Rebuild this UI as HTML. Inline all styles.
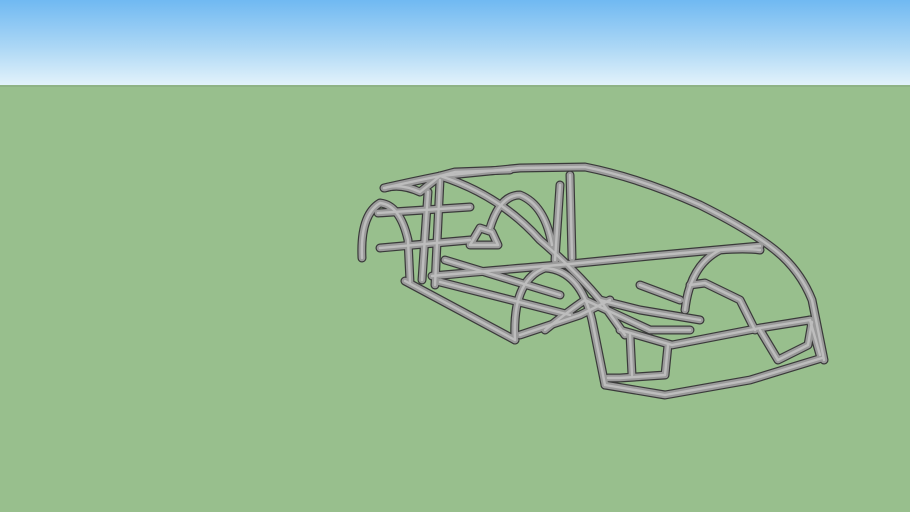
<!DOCTYPE html>
<html><head><meta charset="utf-8"><style>
html,body{margin:0;padding:0;width:910px;height:512px;overflow:hidden}
body{background:#98bf8d;position:relative}
.sky{position:absolute;left:0;top:0;width:910px;height:86px;background:linear-gradient(#70b9f2,#acd7f5 55%,#e4f3fb)}
.hz{position:absolute;left:0;top:85px;width:910px;height:2px;background:#8fb386}
svg{position:absolute;left:0;top:0}
</style></head><body>
<div class="sky"></div><div class="hz"></div>
<svg width="910" height="512" viewBox="0 0 910 512">
<defs>
<g id="f" fill="none" stroke-linejoin="round" stroke-linecap="round">
<path d="M384 188 Q410 182 440 176 L520 168 L585 167 Q640 178 700 205 Q750 230 775 250 Q800 270 812 300 L818 330 L824 360"/>
<path d="M440 176 L455 172 L510 170"/>
<path d="M440 176 Q500 195 540 240 Q575 270 600 300 L625 335"/>
<path d="M362 258 Q360 215 380 203 Q400 205 408 240 L410 282"/>
<path d="M385 188 Q400 183 420 192 L440 176"/>
<path d="M428 192 L422 280"/><path d="M440 180 L435 285"/>
<path d="M490 228 Q500 195 520 195 Q545 205 552 245"/>
<path d="M570 175 L572 258"/><path d="M560 185 L555 260"/>
<path d="M378 213 L470 207"/>
<path d="M380 248 L470 240"/>
<path d="M432 276 Q520 268 570 264 L650 256 L760 246"/>
<path d="M405 281 L515 340"/>
<path d="M440 282 L570 315"/>
<path d="M445 260 L560 295"/>
<path d="M515 340 Q512 280 545 268 Q580 270 592 320 L605 385"/>
<path d="M520 335 L580 315 L610 300"/>
<path d="M545 330 Q570 310 585 300"/>
<path d="M600 300 L640 310 L700 320"/>
<path d="M620 330 L672 345 L760 328 L810 320"/>
<path d="M605 385 L665 395 L750 380 L822 358"/>
<path d="M608 378 L620 378 L665 375 L668 345"/>
<path d="M630 335 L632 375"/>
<path d="M760 330 L778 360 L808 345 L812 322"/>
<path d="M810 320 L820 355"/>
<path d="M685 310 Q690 265 720 250 Q745 248 760 250"/>
<path d="M690 285 L705 283 L740 300 L755 330"/>
<path d="M640 285 L680 300"/>
<path d="M585 300 L650 330 L690 330"/>
<path d="M470 245 L480 228 L492 232 L498 245 Z"/>
</g>
</defs>
<use href="#f" stroke="#3a3a3a" stroke-width="9"/>
<use href="#f" stroke="#9a9a9a" stroke-width="6.6"/>
<use href="#f" stroke="#bdbdbd" stroke-width="2.4"/>
</svg>
</body></html>
